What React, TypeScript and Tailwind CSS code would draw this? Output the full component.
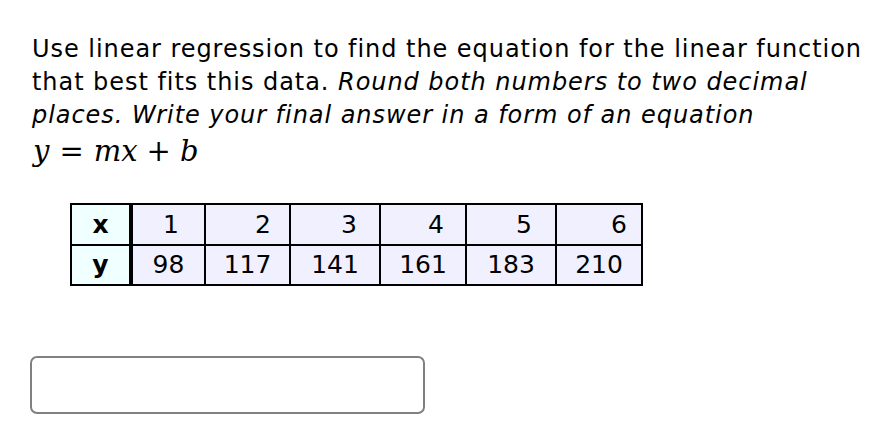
import React from "react";

const xs = ["1", "2", "3", "4", "5", "6"];
const ys = ["98", "117", "141", "161", "183", "210"];
const widths = [74, 85, 90, 86, 90, 86];
const xPad = [25, 18, 22, 21, 23, 14];

export default function App() {
  return (
    <div className="w-[886px] h-[430px] bg-white text-black overflow-hidden" style={{ fontFamily: '"DejaVu Sans", sans-serif' }}>
      <div className="pl-[32px] pt-[33px] text-[24px] leading-[33px] tracking-[0.95px] whitespace-nowrap">
        <p>Use linear regression to find the equation for the linear function</p>
        <p>
          that best fits this data. <em>Round both numbers to two decimal</em>
        </p>
        <p>
          <em>places. Write your final answer in a form of an equation</em>
        </p>
        <p
          className="flex items-center text-[29px] leading-[38px] tracking-normal pl-[1px]"
          style={{ fontFamily: '"DejaVu Serif", serif' }}
        >
          <span className="italic">y</span>
          <span className="mx-[10px]">=</span>
          <span className="italic">m</span>
          <span className="italic">x</span>
          <span className="mx-[9px]">+</span>
          <span className="italic">b</span>
        </p>
      </div>
      <div className="pl-[70px] pt-[33px]">
        <table className="border-collapse text-[25px]">
          <tbody>
            <tr className="h-[41px]">
              <td className="w-[60px] bg-[#f0ffff] border-2 border-black border-r-4 text-center font-bold">x</td>
              {xs.map((v, i) => (
                <td
                  key={i}
                  className="bg-[#f0f0ff] border-2 border-black text-right"
                  style={{ width: widths[i], paddingRight: xPad[i] }}
                >
                  {v}
                </td>
              ))}
            </tr>
            <tr className="h-[40px]">
              <td className="bg-[#f0ffff] border-2 border-black border-r-4 text-center font-bold">y</td>
              {ys.map((v, i) => (
                <td key={i} className="bg-[#f0f0ff] border-2 border-black text-center">
                  {v}
                </td>
              ))}
            </tr>
          </tbody>
        </table>
      </div>
      <div className="pl-[30px] pt-[70px]">
        <div className="w-[395px] h-[58px] border-2 border-[#808080] rounded-[7px] bg-white" />
      </div>
    </div>
  );
}
